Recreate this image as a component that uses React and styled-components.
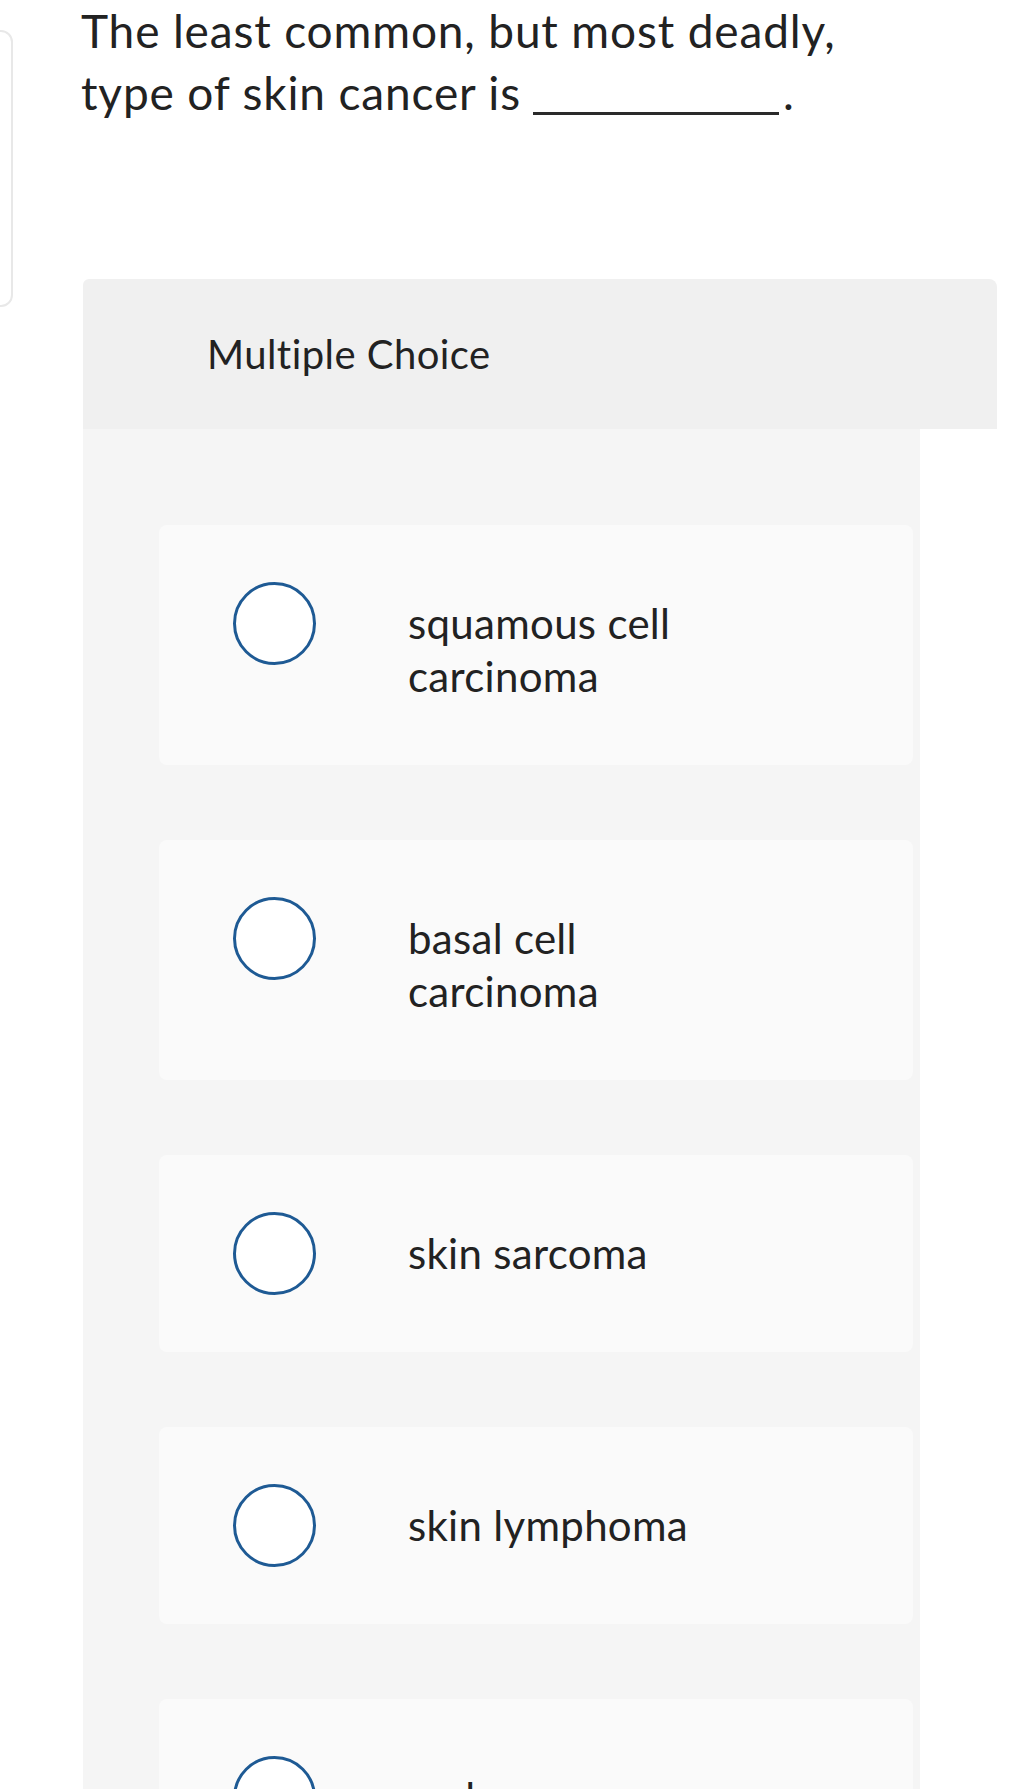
import React from "react";
import styled, { createGlobalStyle } from "styled-components";

const Global = createGlobalStyle`
  html, body { margin: 0; padding: 0; background: #ffffff; }
  body { font-family: Lato, "Liberation Sans", sans-serif; color: #222222; overflow: hidden; }
  * { box-sizing: border-box; }
`;

const Page = styled.div`
  display: flex;
  align-items: flex-start;
  width: 1027px;
  height: 1789px;
  overflow: hidden;
`;

const SideCard = styled.div`
  flex-shrink: 0;
  width: 40px;
  height: 277px;
  margin-left: -27px;
  margin-top: 30px;
  border: 2px solid #e8e8e8;
  border-radius: 12px;
  background: #ffffff;
`;

const Main = styled.div`
  display: flex;
  flex-direction: column;
  margin-left: 70px;
`;

const Question = styled.p`
  margin: 0 0 155px -2px;
  font-size: 46px;
  line-height: 62px;
  letter-spacing: 0.85px;
  color: #222222;
`;

const Blank = styled.span`
  display: inline-block;
  width: 246px;
  height: 0;
  border-bottom: 3px solid #2a2a2a;
  margin: 0 4px -5px 12px;
`;

const Header = styled.div`
  display: flex;
  align-items: center;
  width: 914px;
  height: 150px;
  padding-left: 124px;
  background: #f0f0f0;
  border-radius: 6px 8px 0 0;
  font-size: 40px;
  letter-spacing: 0.45px;
  color: #222222;
`;

const Choices = styled.div`
  display: flex;
  flex-direction: column;
  gap: 75px;
  width: 837px;
  padding: 96px 7px 0 76px;
  background: #f5f5f5;
  min-height: 1400px;
`;

const Card = styled.label`
  display: flex;
  align-items: flex-start;
  padding: 57px 20px 57px 74px;
  background: #fafafa;
  border-radius: 8px;
  cursor: pointer;
`;

const Radio = styled.span`
  flex-shrink: 0;
  width: 83px;
  height: 83px;
  border: 3px solid #1e5a94;
  border-radius: 50%;
  background: #ffffff;
`;

const Label = styled.span`
  margin-left: 92px;
  padding: 15px 0 5px;
  max-width: 310px;
  font-size: 42px;
  line-height: 53px;
  letter-spacing: 0.3px;
  color: #222222;
`;

const options = [
  "squamous cell carcinoma",
  "basal cell carcinoma",
  "skin sarcoma",
  "skin lymphoma",
  "melanoma",
];

export default function App() {
  return (
    <>
      <Global />
      <Page>
        <SideCard />
        <Main>
          <Question>
            The least common, but most deadly,
            <br />
            type of skin cancer is<Blank />.
          </Question>
          <Header>Multiple Choice</Header>
          <Choices>
            {options.map((o) => (
              <Card key={o}>
                <Radio />
                <Label>{o}</Label>
              </Card>
            ))}
          </Choices>
        </Main>
      </Page>
    </>
  );
}
